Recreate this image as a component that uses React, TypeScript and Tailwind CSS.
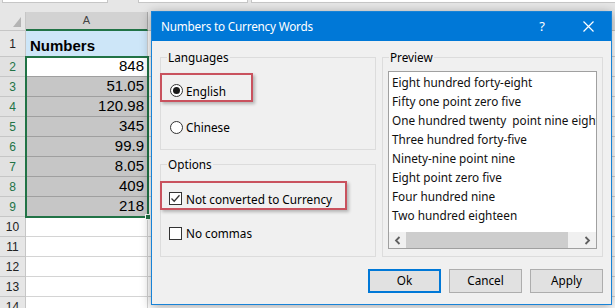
import React from "react";

const rows = [
  { n: 2, v: "848" },
  { n: 3, v: "51.05" },
  { n: 4, v: "120.98" },
  { n: 5, v: "345" },
  { n: 6, v: "99.9" },
  { n: 7, v: "8.05" },
  { n: 8, v: "409" },
  { n: 9, v: "218" },
];

const preview = [
  "Eight hundred forty-eight",
  "Fifty one point zero five",
  "One hundred twenty  point nine eighty",
  "Three hundred forty-five",
  "Ninety-nine point nine",
  "Eight point zero five",
  "Four hundred nine",
  "Two hundred eighteen",
];

function Radio({ checked }: { checked?: boolean }) {
  return (
    <div className="w-[13px] h-[13px] rounded-full border border-[#333333] bg-white flex items-center justify-center shrink-0">
      {checked && <div className="w-[7px] h-[7px] rounded-full bg-[#1a1a1a]" />}
    </div>
  );
}

function Check({ checked }: { checked?: boolean }) {
  return (
    <div className="w-[13px] h-[13px] border border-[#333333] bg-white flex items-center justify-center shrink-0">
      {checked && (
        <svg width="11" height="11" viewBox="0 0 11 11">
          <path d="M1.5 5.5 L4.2 8.2 L9.5 2.3" fill="none" stroke="#333333" strokeWidth="1.3" />
        </svg>
      )}
    </div>
  );
}

function Chevron({ dir }: { dir: "l" | "r" }) {
  return (
    <svg width="7" height="9" viewBox="0 0 7 9">
      <path
        d={dir === "l" ? "M5.5 1 L2 4.5 L5.5 8" : "M1.5 1 L5 4.5 L1.5 8"}
        fill="none"
        stroke="#606060"
        strokeWidth="1.8"
      />
    </svg>
  );
}

export default function App() {
  return (
    <div className="relative w-[615px] h-[308px] overflow-hidden bg-[#e6e6e6] font-['Liberation_Sans',Arial,sans-serif]">
      {/* formula bar remnants */}
      <div className="flex h-[3px]">
        <div className="ml-[2px] w-[106px] bg-white border-x border-b border-[#c6c6c6]" />
        <div className="ml-[30px] w-[110px] bg-white border-x border-b border-[#c6c6c6]" />
        <div className="ml-[3px] flex-1 bg-white border-l border-b border-[#c6c6c6]" />
      </div>
      <div className="h-[9px]" />

      {/* column header */}
      <div className="flex h-[19px]">
        <div className="w-[26px] flex items-end justify-end pr-[4px] pb-[3px] border-r border-b border-[#c6c6c6]">
          <svg width="8" height="10" viewBox="0 0 8 10">
            <path d="M8 0 L8 10 L0 10 Z" fill="#b4b4b4" />
          </svg>
        </div>
        <div className="w-[122px] bg-[#d2d2d2] border-r border-[#ababab] border-b-2 border-b-[#217346] flex items-center justify-center text-[11px] text-[#444444]">
          A
        </div>
        <div className="flex-1 border-b border-[#c6c6c6]" />
      </div>

      {/* row 1 */}
      <div className="flex h-[26px]">
        <div className="w-[26px] border-r border-b border-[#c6c6c6] flex items-center justify-center text-[12px] text-[#222222]">
          1
        </div>
        <div className="w-[122px] bg-[#cde6f8] border-r border-b border-[#d4d4d4] flex items-end pl-[4px] pb-[3px] text-[15px] font-bold text-black leading-none">
          Numbers
        </div>
        <div className="flex-1 bg-white border-b border-[#d4d4d4]" />
      </div>

      {/* data rows */}
      {rows.map((r, i) => (
        <div key={r.n} className="flex h-[20px]">
          <div className="w-[26px] bg-[#e1e1e1] border-r border-[#217346] border-b border-b-[#c6c6c6] flex items-center justify-center text-[12px] text-[#217346]">
            {r.n}
          </div>
          <div
            className={
              i === 0
                ? "w-[122px] bg-white border-r border-b border-[#9f9f9f] flex items-center justify-end pr-[3px] text-[15px] text-black"
                : "w-[122px] bg-[#c6c6c6] border-r border-b border-[#9f9f9f] flex items-center justify-end pr-[3px] text-[15px] text-black"
            }
          >
            {r.v}
          </div>
          <div className="flex-1 bg-white border-b border-[#d4d4d4]" />
        </div>
      ))}

      {[10, 11, 12, 13, 14].map((n) => (
        <div key={n} className="flex h-[20px]">
          <div className="w-[26px] border-r border-b border-[#c6c6c6] flex items-center justify-center text-[12px] text-[#222222]">
            {n}
          </div>
          <div className="w-[122px] bg-white border-r border-b border-[#d4d4d4]" />
          <div className="flex-1 bg-white border-b border-[#d4d4d4]" />
        </div>
      ))}

      {/* selection outline */}
      <div className="absolute left-[25px] top-[56px] w-[124px] h-[162px] border-2 border-[#217346]" />
      <div className="absolute left-[145px] top-[214px] w-[6px] h-[6px] bg-[#217346] border border-white" />

      {/* dialog */}
      <div className="absolute left-[151px] top-[11px] w-[461px] h-[294px] border border-[#1883d7] bg-[#f0f0f0] shadow-[0_2px_10px_rgba(0,0,0,0.35)] flex flex-col font-['Noto_Sans','Open_Sans',sans-serif] text-[11.75px] text-black">
        <div className="h-[29px] bg-[#0078d7] text-white flex items-center">
          <div className="pl-[9px] tracking-[-0.2px]">Numbers to Currency Words</div>
          <div className="ml-auto w-[46px] flex justify-center text-[13px]">?</div>
          <div className="w-[46px] flex justify-center">
            <svg width="11" height="11" viewBox="0 0 11 11">
              <path d="M0.5 0.5 L10.5 10.5 M10.5 0.5 L0.5 10.5" stroke="white" strokeWidth="1.2" />
            </svg>
          </div>
        </div>

        <div className="flex-1 flex flex-col px-[8px] pt-[8px] pb-[11px]">
          <div className="flex gap-[6px] h-[208px]">
            <div className="w-[216px] shrink-0 flex flex-col gap-[6px]">
              <fieldset className="h-[101px] border border-[#dcdcdc]">
                <legend className="ml-[6px] px-[1px] leading-[16px]">Languages</legend>
                <div className="mt-[8px] -ml-[1px] w-[93px] h-[29px] border-2 border-[#c9525e] shadow-[2px_2px_3px_rgba(0,0,0,0.25)] flex items-center pl-[8px] pt-[6px] gap-[3px]">
                  <Radio checked />
                  <span className="leading-[16px]">English</span>
                </div>
                <div className="mt-[17px] h-[16px] flex items-center pl-[9px] gap-[3px]">
                  <Radio />
                  <span className="leading-[16px]">Chinese</span>
                </div>
              </fieldset>
              <fieldset className="h-[101px] border border-[#dcdcdc]">
                <legend className="ml-[6px] px-[1px] leading-[16px]">Options</legend>
                <div className="mt-[9px] -ml-[1px] w-[187px] h-[29px] border-2 border-[#c9525e] shadow-[2px_2px_3px_rgba(0,0,0,0.25)] flex items-center pl-[7px] pt-[6px] gap-[4px]">
                  <Check checked />
                  <span className="leading-[16px]">Not converted to Currency</span>
                </div>
                <div className="mt-[15px] h-[16px] flex items-center pl-[8px] gap-[4px]">
                  <Check />
                  <span className="leading-[16px]">No commas</span>
                </div>
              </fieldset>
            </div>
            <fieldset className="flex-1 min-w-0 border border-[#dcdcdc]">
              <legend className="ml-[6px] px-[1px] leading-[16px]">Preview</legend>
              <div className="mt-[6px] mx-[5px] h-[178px] border border-[#a0a0a0] bg-white flex flex-col overflow-hidden">
                <div className="flex-1 min-w-0 overflow-hidden pt-[1px] pl-[3px]">
                  {preview.map((p) => (
                    <div key={p} className="leading-[19px] whitespace-pre text-[#101010]">
                      {p}
                    </div>
                  ))}
                </div>
                <div className="h-[16px] flex bg-[#f0f0f0]">
                  <div className="w-[17px] flex items-center justify-center">
                    <Chevron dir="l" />
                  </div>
                  <div className="w-[162px] bg-[#cdcdcd]" />
                  <div className="ml-auto w-[17px] flex items-center justify-center">
                    <Chevron dir="r" />
                  </div>
                </div>
              </div>
            </fieldset>
          </div>
          <div className="mt-auto flex justify-end gap-[8px]">
            <button className="w-[73px] h-[24px] bg-[#e1e1e1] border-2 border-[#0078d7]">Ok</button>
            <button className="w-[73px] h-[24px] bg-[#e1e1e1] border border-[#adadad]">Cancel</button>
            <button className="w-[73px] h-[24px] bg-[#e1e1e1] border border-[#adadad]">Apply</button>
          </div>
        </div>
      </div>
    </div>
  );
}
